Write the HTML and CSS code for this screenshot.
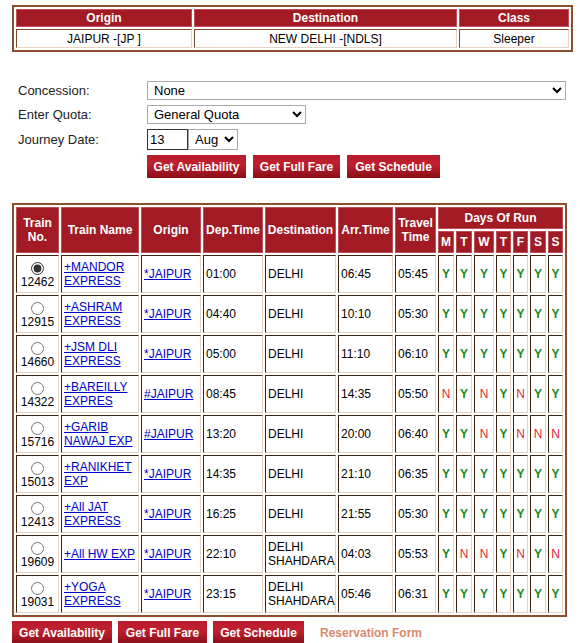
FILE: index.html
```html
<!DOCTYPE html>
<html>
<head>
<meta charset="utf-8">
<link rel="stylesheet" href="styles.css">
</head>
<body>
<div class="page">
  <table class="route">
    <colgroup><col class="rc1"><col class="rc2"><col class="rc3"></colgroup>
    <tr><th>Origin</th><th>Destination</th><th>Class</th></tr>
    <tr><td>JAIPUR -[JP ]</td><td>NEW DELHI -[NDLS]</td><td>Sleeper</td></tr>
  </table>

  <div class="form">
    <label class="lbl">Concession:</label>
    <select class="sel sel-wide"><option>None</option></select>
    <label class="lbl">Enter Quota:</label>
    <select class="sel sel-quota"><option>General Quota</option></select>
    <label class="lbl">Journey Date:</label>
    <div class="date">
      <input class="day" type="text" value="13">
      <select class="sel sel-month"><option>Aug</option></select>
    </div>
    <span></span>
    <div class="btns">
      <button class="btn b1">Get Availability</button>
      <button class="btn b2">Get Full Fare</button>
      <button class="btn b3">Get Schedule</button>
    </div>
  </div>

  <table class="trains">
    <colgroup>
      <col class="w43"><col class="w78"><col class="w60"><col class="w60"><col class="w71"><col class="w55"><col class="w41">
      <col class="w16"><col class="w16"><col class="w20"><col class="w15"><col class="w15"><col class="w16"><col class="w15">
    </colgroup>
    <tr class="h1">
      <th rowspan="2">Train<br>No.</th>
      <th rowspan="2">Train Name</th>
      <th rowspan="2">Origin</th>
      <th rowspan="2">Dep.Time</th>
      <th rowspan="2">Destination</th>
      <th rowspan="2">Arr.Time</th>
      <th rowspan="2">Travel<br>Time</th>
      <th colspan="7">Days Of Run</th>
    </tr>
    <tr class="h2"><th>M</th><th>T</th><th>W</th><th>T</th><th>F</th><th>S</th><th>S</th></tr>

    <tr><td class="no"><input type="radio" name="t" checked><br>12462</td><td><a href="#">+MANDOR EXPRESS</a></td><td><a href="#">*JAIPUR</a></td><td>01:00</td><td class="dst">DELHI</td><td>06:45</td><td>05:45</td><td class="y">Y</td><td class="y">Y</td><td class="y">Y</td><td class="y">Y</td><td class="y">Y</td><td class="y">Y</td><td class="y">Y</td></tr>
    <tr><td class="no"><input type="radio" name="t"><br>12915</td><td><a href="#">+ASHRAM EXPRESS</a></td><td><a href="#">*JAIPUR</a></td><td>04:40</td><td class="dst">DELHI</td><td>10:10</td><td>05:30</td><td class="y">Y</td><td class="y">Y</td><td class="y">Y</td><td class="y">Y</td><td class="y">Y</td><td class="y">Y</td><td class="y">Y</td></tr>
    <tr><td class="no"><input type="radio" name="t"><br>14660</td><td><a href="#">+JSM DLI EXPRESS</a></td><td><a href="#">*JAIPUR</a></td><td>05:00</td><td class="dst">DELHI</td><td>11:10</td><td>06:10</td><td class="y">Y</td><td class="y">Y</td><td class="y">Y</td><td class="y">Y</td><td class="y">Y</td><td class="y">Y</td><td class="y">Y</td></tr>
    <tr><td class="no"><input type="radio" name="t"><br>14322</td><td><a href="#">+BAREILLY EXPRES</a></td><td><a href="#">#JAIPUR</a></td><td>08:45</td><td class="dst">DELHI</td><td>14:35</td><td>05:50</td><td class="n">N</td><td class="y">Y</td><td class="n">N</td><td class="y">Y</td><td class="n">N</td><td class="y">Y</td><td class="y">Y</td></tr>
    <tr><td class="no"><input type="radio" name="t"><br>15716</td><td><a href="#">+GARIB NAWAJ EXP</a></td><td><a href="#">#JAIPUR</a></td><td>13:20</td><td class="dst">DELHI</td><td>20:00</td><td>06:40</td><td class="y">Y</td><td class="y">Y</td><td class="n">N</td><td class="y">Y</td><td class="n">N</td><td class="n">N</td><td class="n">N</td></tr>
    <tr><td class="no"><input type="radio" name="t"><br>15013</td><td><a href="#">+RANIKHET EXP</a></td><td><a href="#">*JAIPUR</a></td><td>14:35</td><td class="dst">DELHI</td><td>21:10</td><td>06:35</td><td class="y">Y</td><td class="y">Y</td><td class="y">Y</td><td class="y">Y</td><td class="y">Y</td><td class="y">Y</td><td class="y">Y</td></tr>
    <tr><td class="no"><input type="radio" name="t"><br>12413</td><td><a href="#">+All JAT EXPRESS</a></td><td><a href="#">*JAIPUR</a></td><td>16:25</td><td class="dst">DELHI</td><td>21:55</td><td>05:30</td><td class="y">Y</td><td class="y">Y</td><td class="y">Y</td><td class="y">Y</td><td class="y">Y</td><td class="y">Y</td><td class="y">Y</td></tr>
    <tr><td class="no"><input type="radio" name="t"><br>19609</td><td><a href="#">+All HW EXP</a></td><td><a href="#">*JAIPUR</a></td><td>22:10</td><td class="dst">DELHI SHAHDARA</td><td>04:03</td><td>05:53</td><td class="y">Y</td><td class="n">N</td><td class="n">N</td><td class="y">Y</td><td class="n">N</td><td class="y">Y</td><td class="n">N</td></tr>
    <tr><td class="no"><input type="radio" name="t"><br>19031</td><td><a href="#">+YOGA EXPRESS</a></td><td><a href="#">*JAIPUR</a></td><td>23:15</td><td class="dst">DELHI SHAHDARA</td><td>05:46</td><td>06:31</td><td class="y">Y</td><td class="y">Y</td><td class="y">Y</td><td class="y">Y</td><td class="y">Y</td><td class="y">Y</td><td class="y">Y</td></tr>
  </table>

  <div class="bottom">
    <button class="btn bb1">Get Availability</button>
    <button class="btn bb2">Get Full Fare</button>
    <button class="btn bb3">Get Schedule</button>
    <span class="resform">Reservation Form</span>
  </div>
</div>
</body>
</html>
```

FILE: styles.css
```css
* { box-sizing: border-box; }
html, body { margin: 0; padding: 0; background: #fff; }
body { font-family: "Liberation Sans", Arial, sans-serif; font-size: 12px; color: #000; }
.page { padding: 5px 13px 0 12px; width: 580px; }

/* route table */
.route {
  width: 555px;
  border: 2px solid #8b4f2c;
  border-spacing: 2px;
  table-layout: fixed;
}
.rc1 { width: 176px; }
.rc2 { width: 263px; }
.rc3 { width: 110px; }
.route th {
  background: #a11a24;
  color: #fff;
  font-weight: bold;
  font-size: 12px;
  height: 18px;
  line-height: 14px;
  padding: 0;
  border: 1px solid #c05058;
}
.route td {
  text-align: center;
  height: 19px;
  line-height: 14px;
  padding: 0;
  border: 1px solid;
  border-color: #7a4a2a #e6d3c3 #e6d3c3 #7a4a2a;
}

/* form */
.form {
  margin-top: 29px;
  display: grid;
  grid-template-columns: 129px auto;
  row-gap: 5px;
  padding-left: 6px;
  align-items: center;
  justify-items: start;
}
.lbl { font-size: 13px; color: #222; }
.sel {
  font-family: "Liberation Sans", Arial, sans-serif;
  font-size: 13px;
  height: 19px;
  border: 1px solid #a9a9a9;
  background: #fff;
  color: #000;
  padding: 0 0 0 2px;
}
.sel-wide { width: 419px; }
.sel-quota { width: 159px; }
.date { display: flex; }
.day {
  width: 41px;
  height: 21px;
  border: 1px solid #333;
  font-family: "Liberation Sans", Arial, sans-serif;
  font-size: 13px;
  padding: 1px 2px;
}
.sel-month { width: 50px; height: 21px; }
.btns { display: flex; gap: 7px; }
.btn {
  background: linear-gradient(#b71c2c, #c0202f 40%, #8a0d18);
  color: #fff;
  font-family: "Liberation Sans", Arial, sans-serif;
  font-weight: bold;
  font-size: 12px;
  border: none;
  height: 23px;
  padding: 0;
}
.b1 { width: 99px; }
.b2 { width: 87px; }
.b3 { width: 93px; }

/* trains table */
.trains {
  margin-top: 25px;
  width: 555px;
  border: 2px solid #8b4f2c;
  border-spacing: 2px;
  table-layout: fixed;
}
.w43 { width: 43px; } .w78 { width: 78px; } .w60 { width: 60px; }
.w71 { width: 71px; } .w55 { width: 55px; } .w41 { width: 41px; } .w16 { width: 16px; }
.w20 { width: 20px; } .w15 { width: 15px; }
.trains th {
  background: #a11a24;
  color: #fff;
  font-weight: bold;
  font-size: 12px;
  padding: 0;
  line-height: 14px;
  border: 1px solid #c05058;
}
.trains .h1 th { height: 22px; }
.trains .h2 th { height: 22px; }
.trains td {
  height: 38px;
  padding: 0 2px;
  border: 1px solid;
  border-color: #3c2410 #e6d3c3 #e6d3c3 #3c2410;
  line-height: 14px;
  vertical-align: middle;
}
.trains td.dst { padding: 0 0 0 2px; }
.trains td a { color: #0000cc; text-decoration: underline; }
.trains td.no { text-align: center; padding: 0; }
.trains td.no input { margin: 2px 0 0 0; width: 13px; height: 13px; vertical-align: top; accent-color: #333; }
.trains td.y { color: #1b8a1b; font-weight: bold; text-align: center; padding: 0; }
.trains td.n { color: #e3243a; text-align: center; padding: 0; }

/* bottom */
.bottom { display: flex; align-items: center; margin-top: 4px; gap: 6px; }
.bb1 { width: 100px; }
.bb2 { width: 89px; }
.bb3 { width: 91px; }
.resform { color: #d98a6c; font-weight: bold; font-size: 12px; margin-left: 10px; }
```
